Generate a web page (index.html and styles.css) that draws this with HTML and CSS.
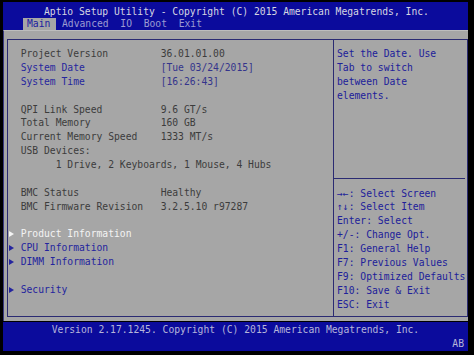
FILE: index.html
```html
<!DOCTYPE html>
<html lang="en">
<head>
    <meta charset="UTF-8">
    <title>Aptio Setup Utility</title>
    <link rel="stylesheet" href="styles.css">
</head>
<body>
    <div class="screen">
        <div class="header">
            <div class="title">Aptio Setup Utility - Copyright (C) 2015 American Megatrends, Inc.</div>
            <div class="tabs"><span class="tab active">Main</span>  Advanced  IO  Boot  Exit</div>
        </div>

        <div class="panel">
            <div class="frame">
                <div class="main">
                    <div class="row"><span class="label">Project Version</span><span>36.01.01.00</span></div>
                    <div class="row item"><span class="label">System Date</span><span class="value">[Tue 03/24/2015]</span></div>
                    <div class="row item"><span class="label">System Time</span><span class="value">[16:26:43]</span></div>
                    <div class="row"></div>
                    <div class="row"><span class="label">QPI Link Speed</span><span>9.6 GT/s</span></div>
                    <div class="row"><span class="label">Total Memory</span><span>160 GB</span></div>
                    <div class="row"><span class="label">Current Memory Speed</span><span>1333 MT/s</span></div>
                    <div class="row"><span class="label">USB Devices:</span></div>
                    <div class="row"><span class="indent">1 Drive, 2 Keyboards, 1 Mouse, 4 Hubs</span></div>
                    <div class="row"></div>
                    <div class="row"><span class="label">BMC Status</span><span>Healthy</span></div>
                    <div class="row"><span class="label">BMC Firmware Revision</span><span>3.2.5.10 r97287</span></div>
                    <div class="row"></div>
                    <div class="row menu selected"><span class="arrow"></span>Product Information</div>
                    <div class="row menu"><span class="arrow"></span>CPU Information</div>
                    <div class="row menu"><span class="arrow"></span>DIMM Information</div>
                    <div class="row"></div>
                    <div class="row menu"><span class="arrow"></span>Security</div>
                </div>

                <div class="side">
                    <div class="help">
                        Set the Date. Use<br>
                        Tab to switch<br>
                        between Date<br>
                        elements.
                    </div>
                    <div class="divider"></div>
                    <div class="keys">
                        <div>→←: Select Screen</div>
                        <div>↑↓: Select Item</div>
                        <div>Enter: Select</div>
                        <div>+/-: Change Opt.</div>
                        <div>F1: General Help</div>
                        <div>F7: Previous Values</div>
                        <div>F9: Optimized Defaults</div>
                        <div>F10: Save &amp; Exit</div>
                        <div>ESC: Exit</div>
                    </div>
                </div>
            </div>
        </div>

        <div class="footer">
            <div class="version">Version 2.17.1245. Copyright (C) 2015 American Megatrends, Inc.</div>
            <div class="code">AB</div>
        </div>
    </div>
</body>
</html>
```

FILE: styles.css
```css
body {
    margin: 0;
    padding: 2px 6px 4px 3px;
    background: #000;
    font-family: "DejaVu Sans Mono", "Liberation Mono", monospace;
    font-size: 9.7px;
}

.screen {
    width: 465px;
    display: flex;
    flex-direction: column;
}

.header {
    height: 28px;
    box-sizing: border-box;
    padding-top: 3px;
    background: #0b0b9c;
}

.title {
    height: 13px;
    line-height: 13px;
    padding-left: 41px;
    color: #d6d6e2;
    white-space: pre;
}

.tabs {
    height: 12px;
    line-height: 12px;
    padding-left: 24px;
    color: #9c9cd2;
    white-space: pre;
}

.tab.active {
    display: inline-block;
    padding: 0 6px 0 4px;
    margin: 0 -6px 0 -4px;
    background: #a6a6a6;
    color: #1c1ca0;
}

.panel {
    height: 291px;
    box-sizing: border-box;
    padding: 8px 0 5px 3px;
    background: #a6a6a6;
    border-left: 1px solid #3a3a80;
    border-top: 1px solid #bdbdbd;
}

.frame {
    height: 278px;
    box-sizing: border-box;
    border: 1px solid #2b2b72;
    display: grid;
    grid-template-columns: 325px 133px;
    column-gap: 1px;
    background: #2b2b72;
}

.main,
.side {
    background: #a6a6a6;
    padding-top: 7px;
    line-height: 13.88px;
}

.main {
    padding-left: 1px;
}

.row {
    height: 13.88px;
    display: flex;
    white-space: pre;
    color: #3c3c3c;
}

.label {
    width: 24ch;
    margin-left: 2ch;
}

.indent {
    margin-left: 8ch;
}

.item {
    color: #26269e;
}

.item .value {
    color: #34348c;
}

.menu {
    color: #24249e;
}

.menu.selected {
    color: #f4f4f4;
}

.arrow {
    width: 2ch;
    display: flex;
    align-items: center;
}

.arrow::before {
    content: "";
    border-left: 5px solid currentColor;
    border-top: 3px solid transparent;
    border-bottom: 3px solid transparent;
}

.side {
    padding-right: 2px;
    color: #20209a;
}

.help,
.keys {
    padding-left: 3px;
    white-space: nowrap;
}

.divider {
    height: 1px;
    margin-top: 75px;
    margin-bottom: 8px;
    background: #2b2b72;
}

.footer {
    height: 29px;
    box-sizing: border-box;
    margin-top: 1px;
    padding-top: 1px;
    background: #0b0b9c;
    color: #b6b6da;
    line-height: 14px;
}

.version {
    text-align: center;
}

.code {
    text-align: right;
    padding-right: 4px;
}
```
